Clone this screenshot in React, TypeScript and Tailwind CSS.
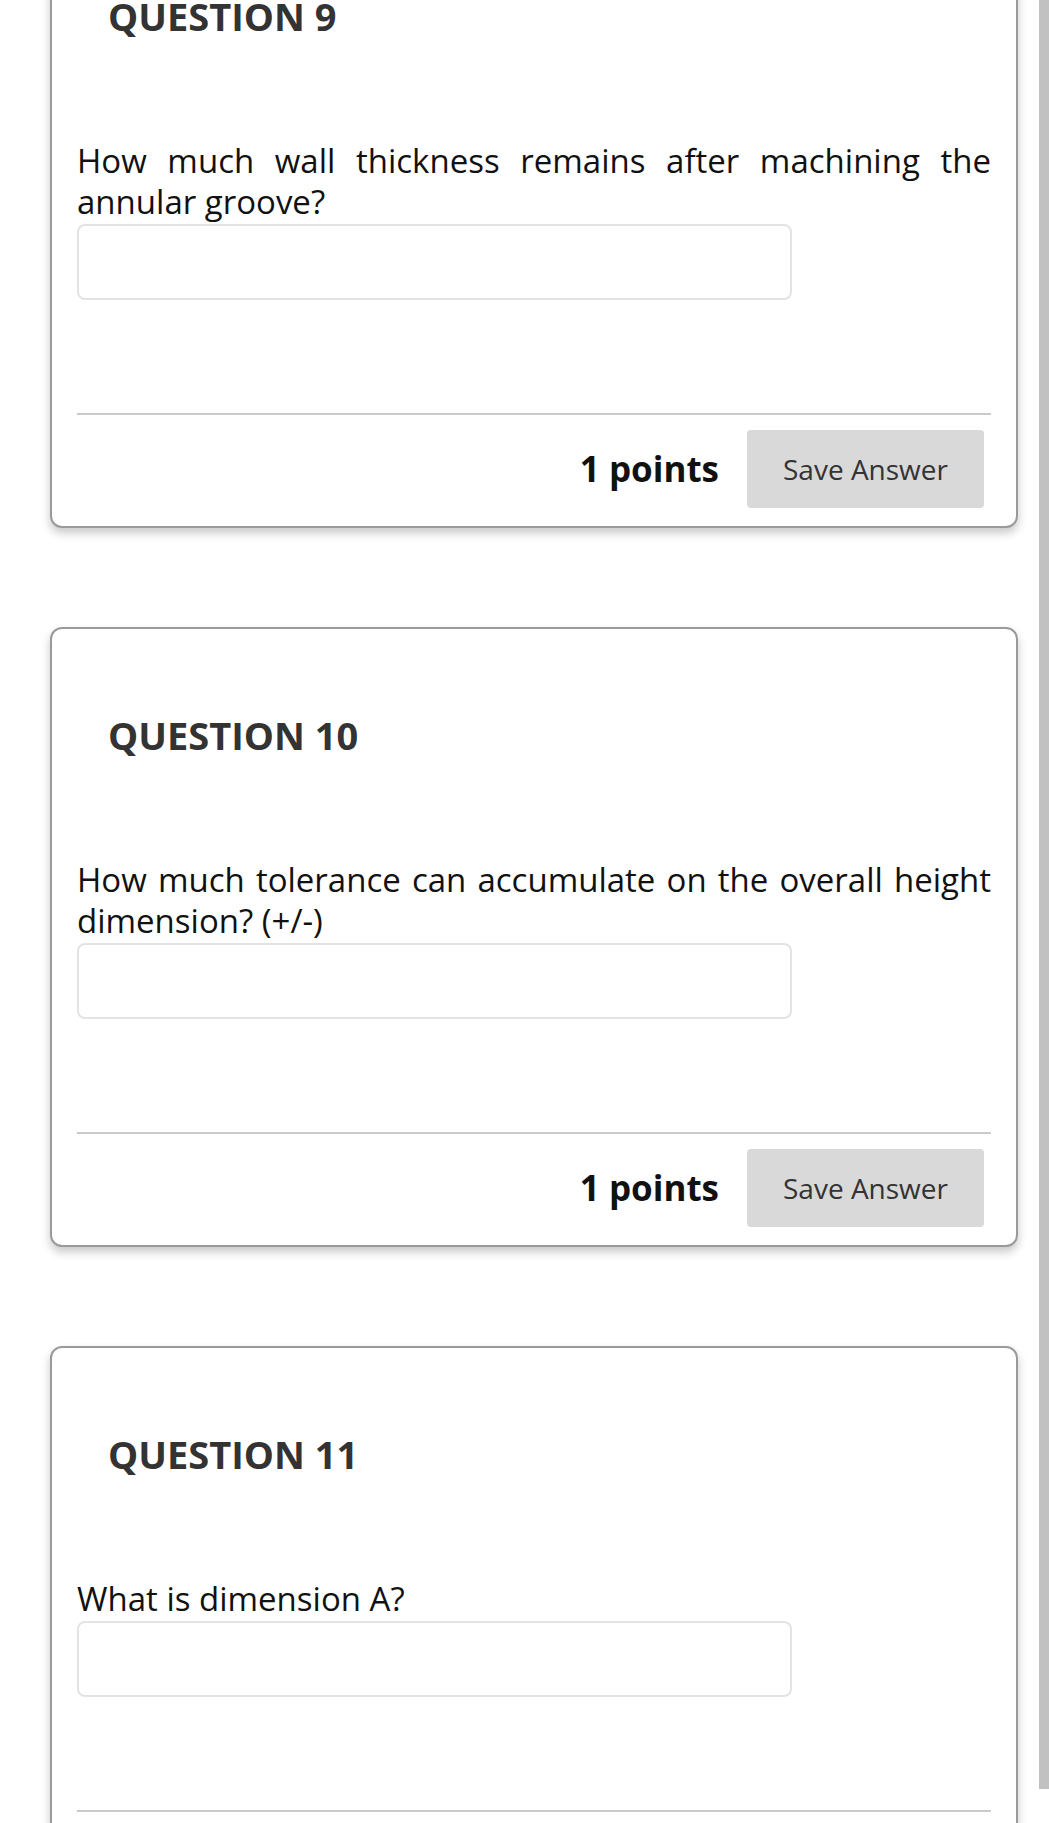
const questions = [
  {
    num: 9,
    text: "How much wall thickness remains after machining the annular groove?",
  },
  {
    num: 10,
    text: "How much tolerance can accumulate on the overall height dimension? (+/-)",
  },
  {
    num: 11,
    text: "What is dimension A?",
  },
];

const QuestionCard = ({ num, text }: { num: number; text: string }) => {
  return (
    <div className="w-[968px] bg-white border-2 border-[#9a9a9a] rounded-[12px] px-[25px] pt-[80px] pb-[18px] shadow-[0_5px_10px_rgba(0,0,0,0.22)]">
      <h2 className="ml-[31px] text-[38px] leading-[52px] font-bold text-[#333]">
        QUESTION {num}
      </h2>
      <p className="mt-[98px] text-[33px] leading-[41px] text-[#111] text-justify">
        {text}
      </p>
      <input
        type="text"
        className="mt-[2px] block w-[715px] h-[76px] border-2 border-[#e3e3e3] rounded-[8px] bg-white outline-none"
      />
      <div className="mt-[113px] h-[2px] bg-[#cacaca]" />
      <div className="mt-[15px] flex justify-end items-center gap-[28px] pr-[7px]">
        <span className="text-[35px] font-bold text-[#111]">1 points</span>
        <button className="w-[237px] h-[78px] bg-[#d9d9d9] rounded-[4px] text-[28px] text-[#333]">
          Save Answer
        </button>
      </div>
    </div>
  );
};

const App = () => {
  return (
    <div className="flex bg-white font-['Open_Sans',sans-serif] h-[1823px] overflow-hidden">
      <main className="w-[1039px] pl-[50px] flex flex-col gap-[99px]">
        <div className="-mt-[92px] flex flex-col gap-[99px]">
          {questions.map((q) => (
            <QuestionCard key={q.num} num={q.num} text={q.text} />
          ))}
        </div>
      </main>
      <div className="w-[10px]">
        <div className="h-[1789px] bg-[#c1c1c1]" />
      </div>
    </div>
  );
};

export default App;
